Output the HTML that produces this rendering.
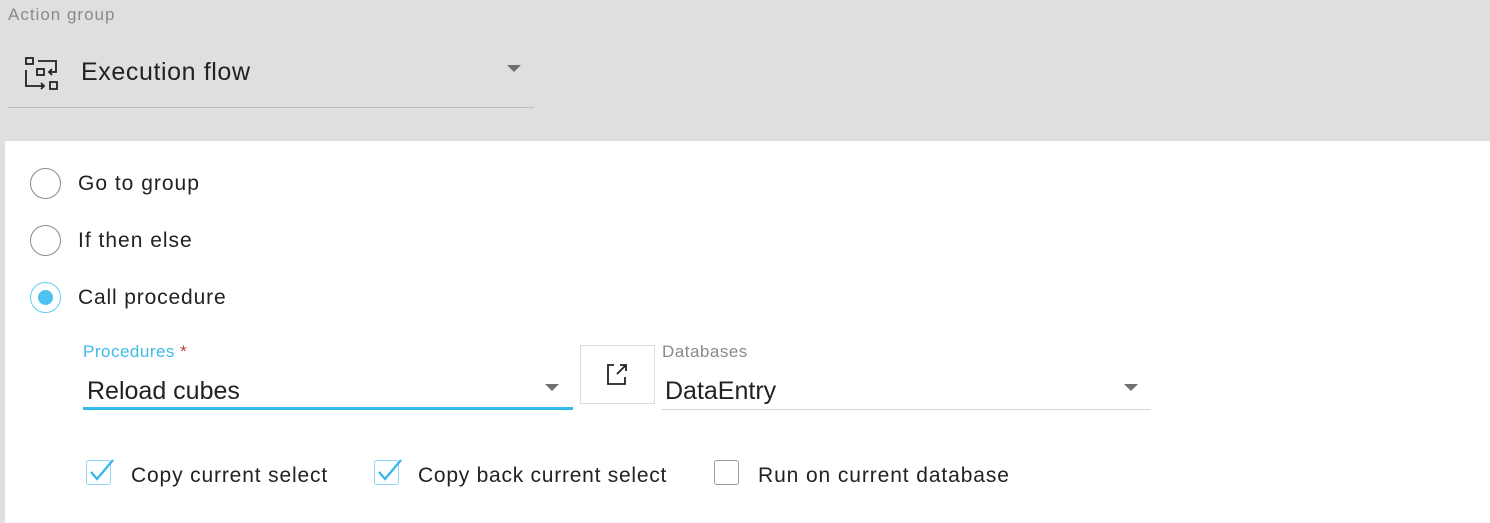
<!DOCTYPE html>
<html><head><meta charset="utf-8"><style>
*{margin:0;padding:0;box-sizing:border-box}
body{width:1490px;height:523px;background:#dfdfdf;font-family:"Liberation Sans",sans-serif;position:relative;overflow:hidden;color:#222}
.a{position:absolute;white-space:nowrap}
.panel{position:absolute;left:5px;top:141px;width:1485px;height:382px;background:#fff}
.radio{position:absolute;left:30px;width:31px;height:31px;border-radius:50%;border:1.5px solid #8a8a8a;background:#fff}
.tri{position:absolute;width:0;height:0;border-left:7px solid transparent;border-right:7px solid transparent;border-top:7px solid #707070}
.cb{position:absolute;width:25px;height:25px;border:1.5px solid #999;border-radius:3px;background:#fff}
.cb.on{border-color:#8fd6f2}
.t{font-size:21px;letter-spacing:0.85px}
</style></head><body>
<div class="a" style="left:8px;top:5px;font-size:17px;color:#8a8a8a;letter-spacing:1px">Action group</div>
<svg class="a" style="left:24px;top:56px" width="36" height="36" viewBox="0 0 36 36" fill="none" stroke="#222" stroke-width="1.8">
<rect x="2" y="2" width="7" height="6"/><rect x="13" y="13" width="7" height="6"/><rect x="26" y="26" width="7" height="7"/>
<path d="M14 5h18v11h-7M28 13l-3 3 3 3"/><path d="M2 14v16h18M17 27l3 3-3 3"/>
</svg>
<div class="a" style="left:81px;top:58px;font-size:25px;color:#222;letter-spacing:0.6px">Execution flow</div>
<div class="tri" style="left:507px;top:65px"></div>
<div class="a" style="left:8px;top:107px;width:526px;height:1px;background:#bdbdbd"></div>
<div class="panel"></div>
<div class="radio" style="top:168px"></div>
<div class="a t" style="left:78px;top:172px;letter-spacing:1px">Go to group</div>
<div class="radio" style="top:225px"></div>
<div class="a t" style="left:78px;top:229px;letter-spacing:1px">If then else</div>
<div class="radio" style="top:282px;border-color:#5fcdf2"><div style="position:absolute;left:6.5px;top:6.5px;width:15px;height:15px;border-radius:50%;background:#4cc3ef"></div></div>
<div class="a t" style="left:78px;top:286px">Call procedure</div>
<div class="a" style="left:83px;top:342px;font-size:17px;color:#3ebbe9;letter-spacing:0.5px">Procedures <span style="color:#b4413a">*</span></div>
<div class="a" style="left:87px;top:377px;font-size:25px">Reload cubes</div>
<div class="tri" style="left:545px;top:384px"></div>
<div class="a" style="left:83px;top:407px;width:490px;height:3px;background:#2fbbec"></div>
<div class="a" style="left:580px;top:345px;width:75px;height:59px;border:1px solid #ddd;background:#fff"></div>
<svg class="a" style="left:605px;top:362px" width="24" height="24" viewBox="0 0 24 24" fill="none" stroke="#222" stroke-width="1.8"><path d="M9 3H3v19h17v-7"/><path d="M12 12L21 3M15 3h6v6"/></svg>
<div class="a" style="left:662px;top:342px;font-size:17px;color:#8a8a8a;letter-spacing:0.5px">Databases</div>
<div class="a" style="left:665px;top:377px;font-size:25px">DataEntry</div>
<div class="tri" style="left:1124px;top:384px"></div>
<div class="a" style="left:661px;top:409px;width:490px;height:1px;background:#d8d8d8"></div>
<div class="cb on" style="left:86px;top:460px"></div>
<svg class="a" style="left:86px;top:456px" width="30" height="30"><path d="M5 16l6 7L27 4" fill="none" stroke="#2fb7ea" stroke-width="2.2"/></svg>
<div class="a t" style="left:131px;top:464px">Copy current select</div>
<div class="cb on" style="left:374px;top:460px"></div>
<svg class="a" style="left:374px;top:456px" width="30" height="30"><path d="M5 16l6 7L27 4" fill="none" stroke="#2fb7ea" stroke-width="2.2"/></svg>
<div class="a t" style="left:418px;top:464px;letter-spacing:0.75px">Copy back current select</div>
<div class="cb" style="left:714px;top:460px"></div>
<div class="a t" style="left:758px;top:464px;letter-spacing:0.9px">Run on current database</div>
</body></html>
